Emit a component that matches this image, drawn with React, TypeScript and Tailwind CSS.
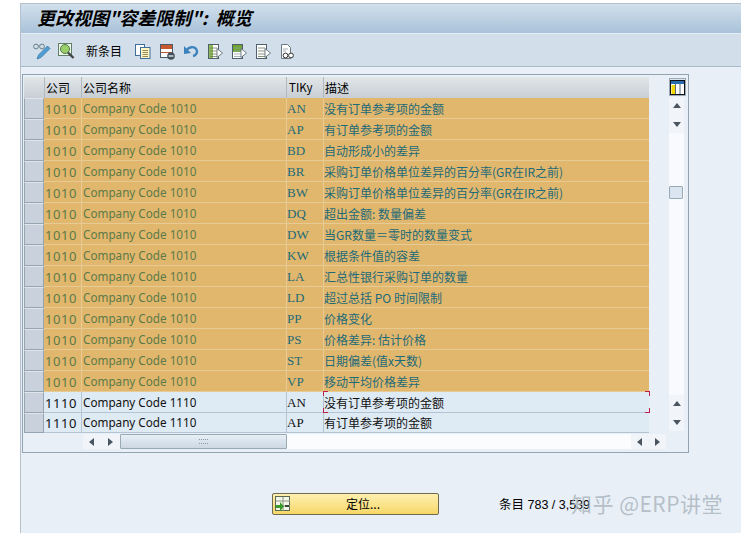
const cjk = "font-['Noto_Sans_CJK_SC','DejaVu_Sans',sans-serif]";
const rows: [string, string, string, string, boolean][] = [
  ["1010", "Company Code 1010", "AN", "没有订单参考项的金额", true],
  ["1010", "Company Code 1010", "AP", "有订单参考项的金额", true],
  ["1010", "Company Code 1010", "BD", "自动形成小的差异", true],
  ["1010", "Company Code 1010", "BR", "采购订单价格单位差异的百分率(GR在IR之前)", true],
  ["1010", "Company Code 1010", "BW", "采购订单价格单位差异的百分率(GR在IR之前)", true],
  ["1010", "Company Code 1010", "DQ", "超出金额: 数量偏差", true],
  ["1010", "Company Code 1010", "DW", "当GR数量＝零时的数量变式", true],
  ["1010", "Company Code 1010", "KW", "根据条件值的容差", true],
  ["1010", "Company Code 1010", "LA", "汇总性银行采购订单的数量", true],
  ["1010", "Company Code 1010", "LD", "超过总括 PO 时间限制", true],
  ["1010", "Company Code 1010", "PP", "价格变化", true],
  ["1010", "Company Code 1010", "PS", "价格差异: 估计价格", true],
  ["1010", "Company Code 1010", "ST", "日期偏差(值x天数)", true],
  ["1010", "Company Code 1010", "VP", "移动平均价格差异", true],
  ["1110", "Company Code 1110", "AN", "没有订单参考项的金额", false],
  ["1110", "Company Code 1110", "AP", "有订单参考项的金额", false],
];

function Tri({ d }: { d: "u" | "d" | "l" | "r" }) {
  const p = { u: "1,7 9,7 5,2", d: "1,3 9,3 5,8", l: "7,1 7,9 2,5", r: "3,1 3,9 8,5" }[d];
  return (
    <svg width="10" height="10" viewBox="0 0 10 10">
      <polygon points={p} fill="#4a5560" />
    </svg>
  );
}

function Sheet({ children }: { children: React.ReactNode }) {
  return (
    <svg width="16" height="17" viewBox="0 0 16 17" fill="none">
      {children}
    </svg>
  );
}

function Toolbar() {
  return (
    <div className="h-[33px] shrink-0 flex items-center bg-[#d2dfea] border-b border-[#a9bac9] pl-[11px] pt-[2px]">
      <svg width="20" height="18" viewBox="0 0 20 18" fill="none">
        <circle cx="4" cy="4.5" r="2.4" stroke="#6a7f88" />
        <circle cx="10" cy="4.5" r="2.4" stroke="#6a7f88" />
        <path d="M6.5 4h1" stroke="#6a7f88" />
        <path d="M5 17l1.5-4 9-9 2.5 2.5-9 9z" fill="#4f9ed6" stroke="#2f6f9f" strokeWidth=".7" />
      </svg>
      <svg className="ml-[5px]" width="18" height="18" viewBox="0 0 18 18" fill="none">
        <rect x="1.5" y="1.5" width="13" height="12" fill="#eef4e8" stroke="#5f7f66" />
        <circle cx="8" cy="7" r="4.5" fill="#9ccf6a" stroke="#4c7a4a" />
        <path d="M11 10.5l5.5 5.5" stroke="#444" strokeWidth="2.4" />
      </svg>
      <span className={`ml-[11px] text-[12px] text-black ${cjk}`}>新条目</span>
      <div className="ml-[13px] flex items-center gap-[8px]">
        <Sheet>
          <rect x=".5" y="1.5" width="9" height="11" fill="#fff" stroke="#3f6f9a" />
          <rect x="5.5" y="4.5" width="9.5" height="11" fill="#fff6c8" stroke="#3f6f9a" />
          <path d="M7.5 7.5h5.5M7.5 9.5h5.5M7.5 11.5h5.5M7.5 13.5h5.5" stroke="#9a8a50" />
        </Sheet>
        <Sheet>
          <rect x="1.5" y="1.5" width="12" height="13" fill="#fff" stroke="#4a5a6a" />
          <rect x="2" y="2" width="11" height="4" fill="#c8582e" />
          <path d="M2 9.5h11" stroke="#c8582e" />
          <circle cx="12" cy="13" r="3.8" fill="#44505a" />
          <path d="M9.6 13h4.8" stroke="#fff" strokeWidth="1.2" />
        </Sheet>
        <Sheet>
          <path d="M3.5 7.5c2-4 8-4.5 10-1 1.5 3-.5 6-3.5 6.5" stroke="#3c82bd" strokeWidth="2.4" />
          <polygon points="1,3 1,11 8,10" fill="#3c82bd" />
        </Sheet>
      </div>
      <div className="ml-[8px] flex items-center gap-[8px]">
        {[0, 1, 2].map((i) => (
          <Sheet key={i}>
            <rect x="1.5" y="1.5" width="10" height="14" fill="#fff" stroke="#50606a" />
            {i === 0 && <rect x="2" y="2" width="4" height="13" fill="#8fbb55" />}
            {i === 1 && <rect x="2" y="2" width="9" height="7" fill="#6fa52f" />}
            <path d="M3 5h7M3 8h7M3 11h7M3 13.5h7" stroke={i === 1 ? "#90a4ae" : "#6a7a60"} strokeWidth=".8" />
            <polygon points="10,5.5 15.5,10 10,14.5" fill="#fff" stroke="#50606a" strokeWidth=".8" />
          </Sheet>
        ))}
        <Sheet>
          <path d="M2.5 1.5h6l3 3v11h-9z" fill="#fff" stroke="#6a7a84" />
          <path d="M4 6h5M4 8h3" stroke="#8a9aa4" strokeWidth=".8" />
          <circle cx="6.5" cy="12.5" r="2.4" fill="#fff" stroke="#333" />
          <circle cx="12" cy="12.5" r="2.4" fill="#fff" stroke="#333" />
        </Sheet>
      </div>
    </div>
  );
}

function Row({ r, i }: { r: (typeof rows)[number]; i: number }) {
  const hl = r[4];
  const last = i === rows.length - 1;
  const focus = i === 14;
  const div = hl ? "border-[#e7cb94]" : "border-[#b4c4d2]";
  const pad = last ? "" : "pt-[1px]";
  const pad2 = last ? "pt-[1px]" : "pt-[2px]";
  return (
    <div className={`flex ${last ? "h-[20px]" : "h-[21px]"}`}>
      <div className="w-[20px] shrink-0 bg-[#c9d2dc] border border-[#97a5b2] border-t-[#dfe5ea]" />
      <div
        className={`relative flex flex-1 items-center border-b leading-none ${
          hl ? "bg-[#e1b76d] border-[#e7cb94] text-[#1d6a78]" : "bg-[#deeaf4] border-[#b4c4d2] text-[#111]"
        }`}
      >
        <div className={`w-[37px] shrink-0 h-full flex items-center pl-[1px] font-['Noto_Sans',sans-serif] text-[13px] tracking-[.6px] ${pad2} ${hl ? "text-[#5c7a48]" : ""}`}>
          {r[0]}
        </div>
        <div className={`w-[205px] shrink-0 h-full flex items-center pl-[1px] border-l font-['Noto_Sans',sans-serif] text-[11.7px] ${pad2} ${div} ${hl ? "text-[#5c7a48]" : ""}`}>
          {r[1]}
        </div>
        <div className={`w-[37px] shrink-0 h-full flex items-center border-l font-['Liberation_Serif',serif] text-[13px] ${pad} ${div}`}>
          {r[2]}
        </div>
        <div className={`flex-1 h-full flex items-center border-l ${cjk} text-[12px] ${pad} ${div}`}>
          {r[3]}
        </div>
        {focus && (
          <div className="absolute left-[279px] right-[-1px] top-[-1px] bottom-[-1px] pointer-events-none">
            <span className="absolute left-0 top-0 w-[5px] h-[5px] border-l border-t border-[#c0204a]" />
            <span className="absolute left-0 bottom-0 w-[5px] h-[5px] border-l border-b border-[#c0204a]" />
            <span className="absolute right-0 top-0 w-[5px] h-[5px] border-r border-t border-[#c0204a]" />
            <span className="absolute right-0 bottom-0 w-[5px] h-[5px] border-r border-b border-[#c0204a]" />
          </div>
        )}
      </div>
    </div>
  );
}

function Arrow({ d, w }: { d: "u" | "d" | "l" | "r"; w: string }) {
  return (
    <div className={`${w} flex items-center justify-center bg-[#f1f5f9]`}>
      <Tri d={d} />
    </div>
  );
}

export default function App() {
  return (
    <div className={`w-[741px] h-[533px] overflow-hidden bg-white pl-[20px] pt-[3px] ${cjk}`}>
      <div className="relative h-[530px] flex flex-col bg-[#e8eff7] border-l border-t border-[#b4c0cb]">
        <div className="h-[30px] shrink-0 flex items-center pl-[16px] pb-[4px] bg-gradient-to-b from-[#d2e0ec] to-[#a9c2d9] border-b border-[#e4edf4]">
          <h1 className={`text-[18px] leading-none font-bold italic text-black ${cjk}`}>更改视图"容差限制":&nbsp;&nbsp;概览</h1>
        </div>
        <Toolbar />
        <div className="mt-[7px] ml-[1px] w-[667px] h-[379px] flex flex-col bg-[#e8eff7] border border-[#92a3b1] pl-[1px] pt-[2px]">
          <div className="flex shrink-0">
            <div className="w-[625px] shrink-0 flex flex-col">
              <div className="h-[21px] flex text-[12px] text-black bg-gradient-to-b from-[#e2e6e9] to-[#c8ced3]">
                <div className="w-[20px] shrink-0" />
                <div className="w-[37px] shrink-0 border-l border-[#b0b8c0] pl-[1px] leading-[21px]">公司</div>
                <div className="w-[205px] shrink-0 border-l border-[#b0b8c0] pl-[1px] leading-[21px]">公司名称</div>
                <div className="w-[37px] shrink-0 border-l border-[#b0b8c0] pl-[2px] leading-[21px] text-[11.5px]">TIKy</div>
                <div className="flex-1 border-l border-[#b0b8c0] pl-[1px] leading-[21px]">描述</div>
              </div>
              {rows.map((r, i) => (
                <Row key={i} r={r} i={i} />
              ))}
            </div>
            <div className="flex-1 flex flex-col pl-[20px] pb-[2px]">
              <div className="w-[17px] h-[18px] mt-[1px] bg-[#dbe5ef] border border-[#9aa9b6] flex items-center justify-center">
                <svg width="15" height="15" viewBox="0 0 15 15">
                  <rect x=".5" y=".5" width="14" height="14" fill="#fff" stroke="#111" />
                  <rect x="1" y="1" width="13" height="3" fill="#2a6cb0" />
                  <rect x="1.5" y="5" width="3.5" height="9" fill="#f5d800" />
                  <path d="M5.5 4v10M10 4v10" stroke="#5a6a7a" />
                </svg>
              </div>
              <div className="flex-1 w-[15px] mt-[1px] flex flex-col">
                <Arrow d="u" w="h-[18px]" />
                <Arrow d="d" w="h-[18px]" />
                <div className="flex-1 bg-[#f8fafd] pt-[53px]">
                  <div className="h-[13px] w-[14px] bg-[#dbe5ef] border border-[#9aa9b6] rounded-[1px]" />
                </div>
                <Arrow d="u" w="h-[18px]" />
                <Arrow d="d" w="h-[18px]" />
              </div>
            </div>
          </div>
          <div className="h-[15px] mt-[1px] flex items-stretch">
            <div className="w-[59px] shrink-0" />
            <div className="w-[37px] shrink-0 flex bg-[#f1f5f9]">
              <Arrow d="l" w="w-[18px]" />
              <Arrow d="r" w="w-[18px]" />
            </div>
            <div className="w-[167px] shrink-0 bg-gradient-to-b from-[#e8eff6] to-[#ccd8e3] border border-[#9aa9b6] rounded-[1px] flex items-center justify-center">
              <span className="w-[9px] h-[5px] border-y border-dotted border-[#8a98a4]" />
            </div>
            <div className="w-[344px] shrink-0 bg-[#fbfcfe]" />
            <div className="w-[35px] shrink-0 flex">
              <Arrow d="l" w="w-[17px]" />
              <Arrow d="r" w="w-[18px]" />
            </div>
          </div>
        </div>
        <div className="mt-[40px] flex items-center">
          <button className="ml-[251px] w-[167px] h-[22px] flex items-center justify-center pl-[15px] rounded-[2px] border border-[#6f6a50] bg-gradient-to-b from-[#fff0b0] to-[#f6d766] text-[12px] text-black relative">
            <svg className="absolute left-[2px] top-[2px]" width="16" height="16" viewBox="0 0 16 16">
              <rect x=".5" y=".5" width="14" height="14" fill="#f4f4e8" stroke="#5a6a50" />
              <path d="M8 1v14M1 5h14M1 10h14" stroke="#8a9a80" />
              <polygon points="1,9 5,9 5,6 9,10.5 5,15 5,12 1,12" fill="#3a9a2a" />
              <rect x="10" y="9" width="4" height="2" fill="#3a4a3a" />
            </svg>
            定位...
          </button>
          <span className="ml-[60px] pt-[2px] text-[12.5px] text-black font-['Liberation_Sans','Noto_Sans_CJK_SC',sans-serif]">条目 783 / 3,539</span>
        </div>
        <div className={`absolute right-[18px] top-[484px] text-[21px] tracking-[.5px] text-[#aab4bdd0] ${cjk}`}>知乎 @ERP讲堂</div>
      </div>
    </div>
  );
}
